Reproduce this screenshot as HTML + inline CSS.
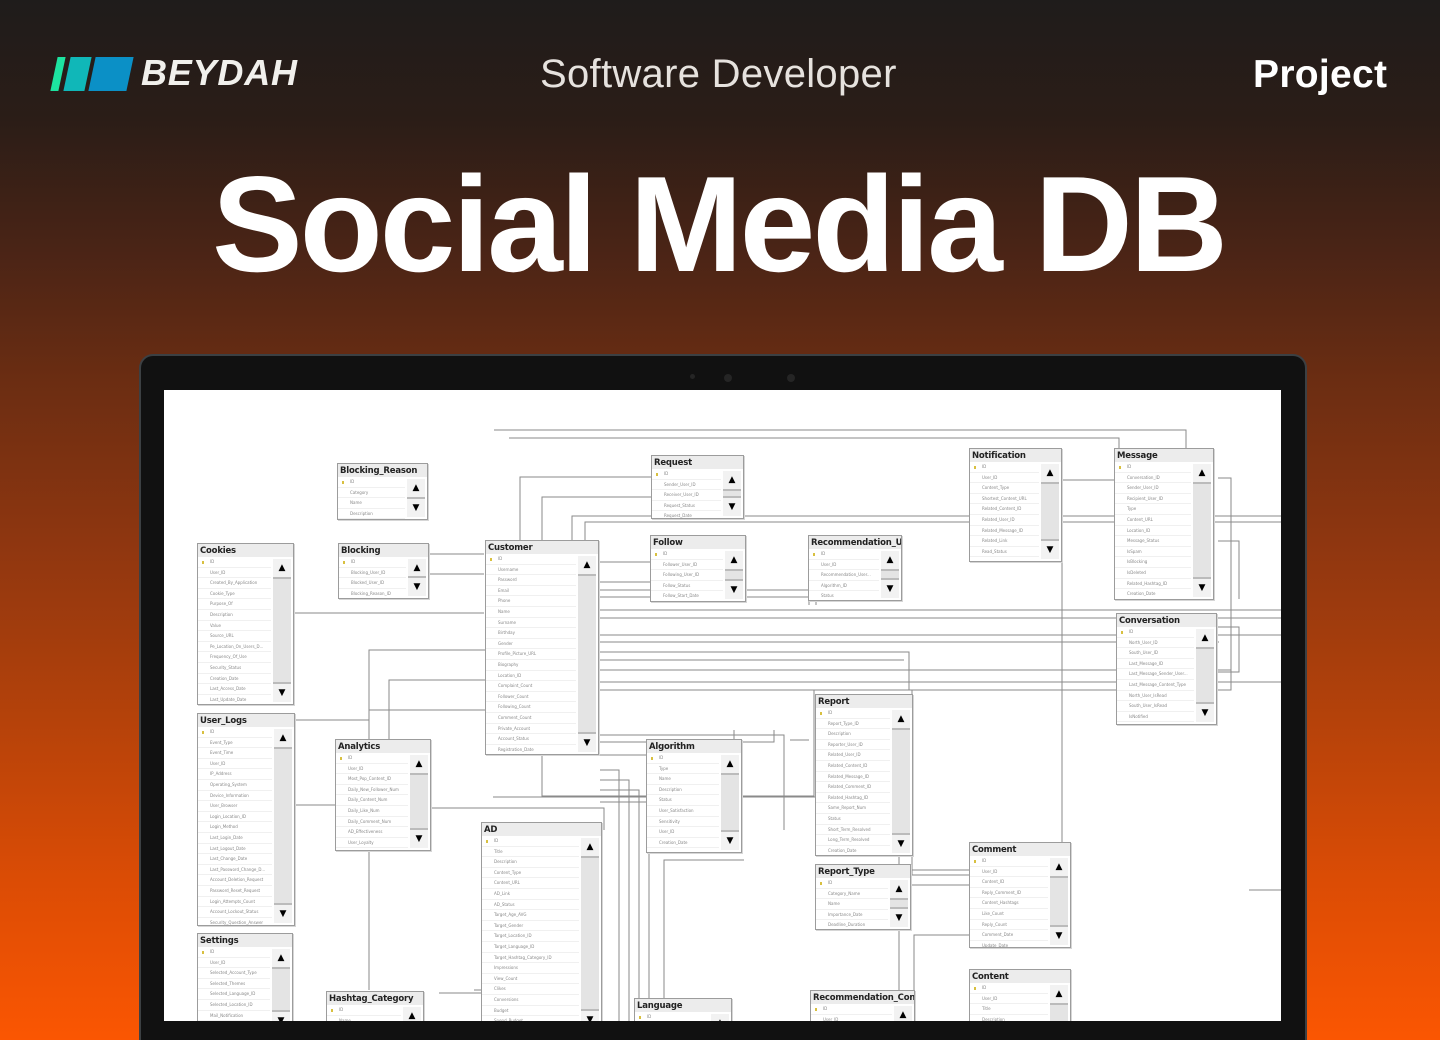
<!DOCTYPE html>
<html><head><meta charset="utf-8"><style>
*{margin:0;padding:0;box-sizing:border-box}
html{width:1440px;height:1040px;overflow:hidden}
body{width:1440px;height:1040px;overflow:hidden;position:relative;font-family:"Liberation Sans",sans-serif;
background:linear-gradient(180deg,#1f1c1b 0px,#2b1d17 120px,#4a2416 250px,#6b2d12 380px,#8e3610 540px,#b5420a 720px,#db4c05 880px,#fb5602 1040px)}
.p{position:absolute;top:57px;height:34px;transform:skewX(-12deg)}
.brand{position:absolute;left:141px;top:52px;font:italic bold 36px "Liberation Sans",sans-serif;color:#f1f0ec;letter-spacing:0.8px}
.sub{position:absolute;left:540px;top:52px;font:300 40px "Liberation Sans",sans-serif;color:#e6e2de;letter-spacing:0.3px}
.proj{position:absolute;left:1253px;top:53px;font:bold 39px "Liberation Sans",sans-serif;color:#fff;letter-spacing:0.3px}
h1{position:absolute;left:212px;top:146px;font:bold 136px "Liberation Sans",sans-serif;color:#fff;letter-spacing:-3px;white-space:nowrap}
.frame{position:absolute;left:139px;top:354px;width:1168px;height:686px;background:#111;border:2px solid #3c4043;border-bottom:0;border-radius:14px 14px 0 0}
.screen{position:absolute;left:164px;top:390px;width:1117px;height:631px;background:#fff;overflow:hidden}
.cam{position:absolute;top:374px;width:6px;height:6px;border-radius:50%;background:#252525}
.t{position:absolute;background:#fff;border:1px solid #9c9c9c;box-shadow:1px 1px 0 #d6d6d6;overflow:hidden}
.t b{display:block;height:13px;background:#ececec;font:bold 8.5px/14px "DejaVu Sans",sans-serif;color:#222;padding-left:2px;white-space:nowrap;letter-spacing:-0.2px}
.t i{display:block;height:10.6px;font:normal 4px/10.6px "DejaVu Sans",sans-serif;color:#888;padding-left:12px;border-bottom:1px solid #f0f0f0;margin-right:22px;white-space:nowrap;overflow:hidden;font-style:normal}
.t i:first-of-type{background:linear-gradient(90deg,transparent 4px,#d8c040 4px,#d8c040 6px,transparent 6px) no-repeat 0 4px/8px 3px}
.sb{position:absolute;right:2px;top:15px;bottom:2px;width:18px;background:#e4e4e4}
.sb:before,.sb:after{position:absolute;left:0;width:18px;height:18px;background:#f2f2f2;border-bottom:2px solid #bbb;font:9px/18px "DejaVu Sans",sans-serif;text-align:center;color:#000}
.sb:before{content:"▲";top:0}
.sb:after{content:"▼";bottom:0;border-top:2px solid #bbb;border-bottom:0}
svg{position:absolute;left:0;top:0}
</style></head><body>
<div class="p" style="left:54px;width:8px;background:#1de3a0"></div>
<div class="p" style="left:67px;width:21px;background:#10b7b8"></div>
<div class="p" style="left:92px;width:38px;background:#0b90c6"></div>
<div class="brand">BEYDAH</div>
<div class="sub">Software Developer</div>
<div class="proj">Project</div>
<h1>Social Media DB</h1>
<div class="frame"></div>
<div class="cam" style="left:690px;width:5px;height:5px"></div>
<div class="cam" style="left:724px;width:8px;height:8px"></div>
<div class="cam" style="left:787px;width:8px;height:8px"></div>
<div class="screen">
<svg width="1117" height="631" fill="none" stroke="#8a8a8a" stroke-width="1">
<path d="M330 40H1022V60M345 48H955V60M356 150V87H487M378 150V107H487M408 150V126H1185M421 150V132H1185"/>
<path d="M260 164H320M260 184H320M130 223H320M330 260H205V330H130M330 290H225V415H130M330 320H205V600M436 172H488M436 192H488"/>
<path d="M436 200H645V215M436 207H652V215M436 220H1185M436 228H1185M436 245H1185V220M436 252H1055M436 262H745V300M436 270H740M436 280H1067M436 292H1160M436 300H1055M436 345H620V440M436 352H610V340M436 365H570V340"/>
<path d="M436 380H455V631M436 390H465V631M436 400H475V631M436 412H485V631M378 365V406H650V300M329 407H735V631M577 352V408M626 350H645"/>
<path d="M898 110V520M897 90H955M1054 88H1067V300H1035M1054 151H1075V209M1054 237H1075V282H1035"/>
<path d="M748 300V485H805M748 495H815M580 470H500V631M745 480H805M810 545H750V631M1165 631V500H1085"/>
<path d="M275 603H370V631M310 600H395M179 418H440V440"/>
</svg>
<div class="t" style="left:173px;top:73px;width:91px;height:57px"><b>Blocking_Reason</b><i>ID</i><i>Category</i><i>Name</i><i>Description</i><div class="sb"></div></div>
<div class="t" style="left:33px;top:153px;width:97px;height:162px"><b>Cookies</b><i>ID</i><i>User_ID</i><i>Created_By_Application</i><i>Cookie_Type</i><i>Purpose_Of</i><i>Description</i><i>Value</i><i>Source_URL</i><i>Pe_Location_On_Users_D...</i><i>Frequency_Of_Use</i><i>Security_Status</i><i>Creation_Date</i><i>Last_Access_Date</i><i>Last_Update_Date</i><div class="sb"></div></div>
<div class="t" style="left:174px;top:153px;width:91px;height:56px"><b>Blocking</b><i>ID</i><i>Blocking_User_ID</i><i>Blocked_User_ID</i><i>Blocking_Reason_ID</i><div class="sb"></div></div>
<div class="t" style="left:321px;top:150px;width:114px;height:215px"><b>Customer</b><i>ID</i><i>Username</i><i>Password</i><i>Email</i><i>Phone</i><i>Name</i><i>Surname</i><i>Birthday</i><i>Gender</i><i>Profile_Picture_URL</i><i>Biography</i><i>Location_ID</i><i>Complaint_Count</i><i>Follower_Count</i><i>Following_Count</i><i>Comment_Count</i><i>Private_Account</i><i>Account_Status</i><i>Registration_Date</i><div class="sb"></div></div>
<div class="t" style="left:487px;top:65px;width:93px;height:64px"><b>Request</b><i>ID</i><i>Sender_User_ID</i><i>Receiver_User_ID</i><i>Request_Status</i><i>Request_Date</i><div class="sb"></div></div>
<div class="t" style="left:486px;top:145px;width:96px;height:67px"><b>Follow</b><i>ID</i><i>Follower_User_ID</i><i>Following_User_ID</i><i>Follow_Status</i><i>Follow_Start_Date</i><div class="sb"></div></div>
<div class="t" style="left:644px;top:145px;width:94px;height:66px"><b>Recommendation_Us</b><i>ID</i><i>User_ID</i><i>Recommendation_User...</i><i>Algorithm_ID</i><i>Status</i><div class="sb"></div></div>
<div class="t" style="left:805px;top:58px;width:93px;height:114px"><b>Notification</b><i>ID</i><i>User_ID</i><i>Content_Type</i><i>Shortest_Content_URL</i><i>Related_Content_ID</i><i>Related_User_ID</i><i>Related_Message_ID</i><i>Related_Link</i><i>Read_Status</i><div class="sb"></div></div>
<div class="t" style="left:950px;top:58px;width:100px;height:152px"><b>Message</b><i>ID</i><i>Conversation_ID</i><i>Sender_User_ID</i><i>Recipient_User_ID</i><i>Type</i><i>Content_URL</i><i>Location_ID</i><i>Message_Status</i><i>IsSpam</i><i>IsBlocking</i><i>IsDeleted</i><i>Related_Hashtag_ID</i><i>Creation_Date</i><div class="sb"></div></div>
<div class="t" style="left:952px;top:223px;width:101px;height:112px"><b>Conversation</b><i>ID</i><i>North_User_ID</i><i>South_User_ID</i><i>Last_Message_ID</i><i>Last_Message_Sender_User...</i><i>Last_Message_Content_Type</i><i>North_User_IsRead</i><i>South_User_IsRead</i><i>IsNotified</i><div class="sb"></div></div>
<div class="t" style="left:651px;top:304px;width:98px;height:162px"><b>Report</b><i>ID</i><i>Report_Type_ID</i><i>Description</i><i>Reporter_User_ID</i><i>Related_User_ID</i><i>Related_Content_ID</i><i>Related_Message_ID</i><i>Related_Comment_ID</i><i>Related_Hashtag_ID</i><i>Same_Report_Num</i><i>Status</i><i>Short_Term_Resolved</i><i>Long_Term_Resolved</i><i>Creation_Date</i><div class="sb"></div></div>
<div class="t" style="left:482px;top:349px;width:96px;height:114px"><b>Algorithm</b><i>ID</i><i>Type</i><i>Name</i><i>Description</i><i>Status</i><i>User_Satisfaction</i><i>Sensitivity</i><i>User_ID</i><i>Creation_Date</i><div class="sb"></div></div>
<div class="t" style="left:171px;top:349px;width:96px;height:112px"><b>Analytics</b><i>ID</i><i>User_ID</i><i>Most_Pop_Content_ID</i><i>Daily_New_Follower_Num</i><i>Daily_Content_Num</i><i>Daily_Like_Num</i><i>Daily_Comment_Num</i><i>AD_Effectiveness</i><i>User_Loyalty</i><div class="sb"></div></div>
<div class="t" style="left:33px;top:323px;width:98px;height:213px"><b>User_Logs</b><i>ID</i><i>Event_Type</i><i>Event_Time</i><i>User_ID</i><i>IP_Address</i><i>Operating_System</i><i>Device_Information</i><i>User_Browser</i><i>Login_Location_ID</i><i>Login_Method</i><i>Last_Login_Date</i><i>Last_Logout_Date</i><i>Last_Change_Date</i><i>Last_Password_Change_D...</i><i>Account_Deletion_Request</i><i>Password_Reset_Request</i><i>Login_Attempts_Count</i><i>Account_Lockout_Status</i><i>Security_Question_Answer</i><div class="sb"></div></div>
<div class="t" style="left:317px;top:432px;width:121px;height:210px"><b>AD</b><i>ID</i><i>Title</i><i>Description</i><i>Content_Type</i><i>Content_URL</i><i>AD_Link</i><i>AD_Status</i><i>Target_Age_AVG</i><i>Target_Gender</i><i>Target_Location_ID</i><i>Target_Language_ID</i><i>Target_Hashtag_Category_ID</i><i>Impressions</i><i>View_Count</i><i>Clikes</i><i>Conversions</i><i>Budget</i><i>Spend_Budget</i><div class="sb"></div></div>
<div class="t" style="left:651px;top:474px;width:96px;height:66px"><b>Report_Type</b><i>ID</i><i>Category_Name</i><i>Name</i><i>Importance_Date</i><i>Deadline_Duration</i><div class="sb"></div></div>
<div class="t" style="left:805px;top:452px;width:102px;height:106px"><b>Comment</b><i>ID</i><i>User_ID</i><i>Content_ID</i><i>Reply_Comment_ID</i><i>Content_Hashtags</i><i>Like_Count</i><i>Reply_Count</i><i>Comment_Date</i><i>Update_Date</i><div class="sb"></div></div>
<div class="t" style="left:33px;top:543px;width:96px;height:100px"><b>Settings</b><i>ID</i><i>User_ID</i><i>Selected_Account_Type</i><i>Selected_Themes</i><i>Selected_Language_ID</i><i>Selected_Location_ID</i><i>Mail_Notification</i><div class="sb"></div></div>
<div class="t" style="left:162px;top:601px;width:98px;height:60px"><b>Hashtag_Category</b><i>ID</i><i>Name</i><div class="sb"></div></div>
<div class="t" style="left:470px;top:608px;width:98px;height:60px"><b>Language</b><i>ID</i><i>Name</i><div class="sb"></div></div>
<div class="t" style="left:646px;top:600px;width:105px;height:60px"><b>Recommendation_Conte</b><i>ID</i><i>User_ID</i><div class="sb"></div></div>
<div class="t" style="left:805px;top:579px;width:102px;height:80px"><b>Content</b><i>ID</i><i>User_ID</i><i>Title</i><i>Description</i><div class="sb"></div></div>
</div>
</body></html>
